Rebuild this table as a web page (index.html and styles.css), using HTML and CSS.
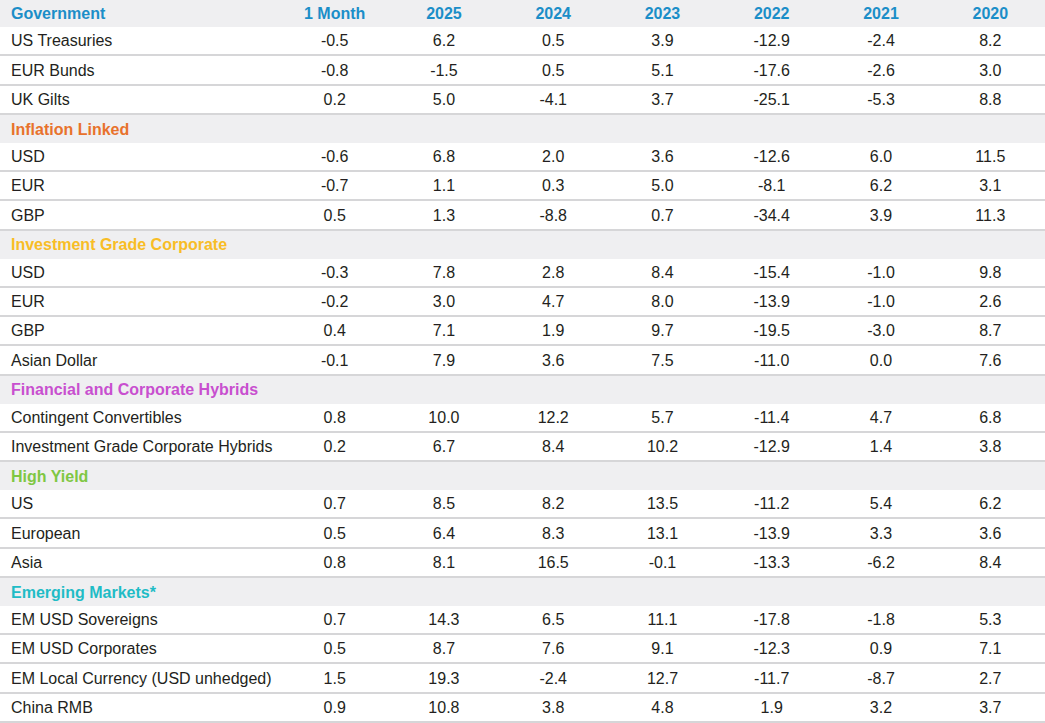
FILE: index.html
```html
<!DOCTYPE html>
<html lang="en">
<head>
<meta charset="utf-8">
<title>Fixed Income Returns</title>
<link rel="stylesheet" href="styles.css">
</head>
<body>
<table class="returns">
  <colgroup>
    <col class="col-label">
    <col span="7" class="col-num">
  </colgroup>
  <thead>
    <tr class="head">
      <th class="label c-gov">Government</th>
      <th>1 Month</th><th>2025</th><th>2024</th><th>2023</th><th>2022</th><th>2021</th><th>2020</th>
    </tr>
  </thead>
  <tbody>
    <tr class="row"><td class="label">US Treasuries</td><td>-0.5</td><td>6.2</td><td>0.5</td><td>3.9</td><td>-12.9</td><td>-2.4</td><td>8.2</td></tr>
    <tr class="row"><td class="label">EUR Bunds</td><td>-0.8</td><td>-1.5</td><td>0.5</td><td>5.1</td><td>-17.6</td><td>-2.6</td><td>3.0</td></tr>
    <tr class="row"><td class="label">UK Gilts</td><td>0.2</td><td>5.0</td><td>-4.1</td><td>3.7</td><td>-25.1</td><td>-5.3</td><td>8.8</td></tr>

    <tr class="cat"><td class="label c-infl" colspan="8">Inflation Linked</td></tr>
    <tr class="row"><td class="label">USD</td><td>-0.6</td><td>6.8</td><td>2.0</td><td>3.6</td><td>-12.6</td><td>6.0</td><td>11.5</td></tr>
    <tr class="row"><td class="label">EUR</td><td>-0.7</td><td>1.1</td><td>0.3</td><td>5.0</td><td>-8.1</td><td>6.2</td><td>3.1</td></tr>
    <tr class="row"><td class="label">GBP</td><td>0.5</td><td>1.3</td><td>-8.8</td><td>0.7</td><td>-34.4</td><td>3.9</td><td>11.3</td></tr>

    <tr class="cat"><td class="label c-ig" colspan="8">Investment Grade Corporate</td></tr>
    <tr class="row"><td class="label">USD</td><td>-0.3</td><td>7.8</td><td>2.8</td><td>8.4</td><td>-15.4</td><td>-1.0</td><td>9.8</td></tr>
    <tr class="row"><td class="label">EUR</td><td>-0.2</td><td>3.0</td><td>4.7</td><td>8.0</td><td>-13.9</td><td>-1.0</td><td>2.6</td></tr>
    <tr class="row"><td class="label">GBP</td><td>0.4</td><td>7.1</td><td>1.9</td><td>9.7</td><td>-19.5</td><td>-3.0</td><td>8.7</td></tr>
    <tr class="row"><td class="label">Asian Dollar</td><td>-0.1</td><td>7.9</td><td>3.6</td><td>7.5</td><td>-11.0</td><td>0.0</td><td>7.6</td></tr>

    <tr class="cat"><td class="label c-fin" colspan="8">Financial and Corporate Hybrids</td></tr>
    <tr class="row"><td class="label">Contingent Convertibles</td><td>0.8</td><td>10.0</td><td>12.2</td><td>5.7</td><td>-11.4</td><td>4.7</td><td>6.8</td></tr>
    <tr class="row"><td class="label">Investment Grade Corporate Hybrids</td><td>0.2</td><td>6.7</td><td>8.4</td><td>10.2</td><td>-12.9</td><td>1.4</td><td>3.8</td></tr>

    <tr class="cat"><td class="label c-hy" colspan="8">High Yield</td></tr>
    <tr class="row"><td class="label">US</td><td>0.7</td><td>8.5</td><td>8.2</td><td>13.5</td><td>-11.2</td><td>5.4</td><td>6.2</td></tr>
    <tr class="row"><td class="label">European</td><td>0.5</td><td>6.4</td><td>8.3</td><td>13.1</td><td>-13.9</td><td>3.3</td><td>3.6</td></tr>
    <tr class="row"><td class="label">Asia</td><td>0.8</td><td>8.1</td><td>16.5</td><td>-0.1</td><td>-13.3</td><td>-6.2</td><td>8.4</td></tr>

    <tr class="cat"><td class="label c-em" colspan="8">Emerging Markets*</td></tr>
    <tr class="row"><td class="label">EM USD Sovereigns</td><td>0.7</td><td>14.3</td><td>6.5</td><td>11.1</td><td>-17.8</td><td>-1.8</td><td>5.3</td></tr>
    <tr class="row"><td class="label">EM USD Corporates</td><td>0.5</td><td>8.7</td><td>7.6</td><td>9.1</td><td>-12.3</td><td>0.9</td><td>7.1</td></tr>
    <tr class="row"><td class="label">EM Local Currency (USD unhedged)</td><td>1.5</td><td>19.3</td><td>-2.4</td><td>12.7</td><td>-11.7</td><td>-8.7</td><td>2.7</td></tr>
    <tr class="row"><td class="label">China RMB</td><td>0.9</td><td>10.8</td><td>3.8</td><td>4.8</td><td>1.9</td><td>3.2</td><td>3.7</td></tr>
  </tbody>
</table>
</body>
</html>
```

FILE: styles.css
```css
html, body {
  margin: 0;
  padding: 0;
  background: #ffffff;
}

body {
  font-family: "Liberation Sans", Arial, sans-serif;
  font-size: 16px;
  color: #231f20;
}

.returns {
  width: 1045px;
  border-collapse: collapse;
  table-layout: fixed;
}

.col-label { width: 280px; }
.col-num { width: 109.28px; }

.returns th,
.returns td {
  padding: 1.5px 0 0 0;
  text-align: center;
  vertical-align: middle;
  white-space: nowrap;
  line-height: 18px;
}

.returns .label {
  text-align: left;
  padding-left: 11px;
}

.head th {
  height: 25.5px;
  background: #efeff1;
  color: #1b8ec8;
  font-weight: bold;
}

.cat td {
  height: 26.5px;
  background: #efeff1;
  font-weight: bold;
}

.row td {
  height: 25.75px;
  border-bottom: 2px solid #d6d6d8;
  background: #ffffff;
}

.c-gov  { color: #1b8ec8; }
.c-infl { color: #e8722c; }
.c-ig   { color: #f8bd26; }
.c-fin  { color: #c84fcf; }
.c-hy   { color: #7fc743; }
.c-em   { color: #1fbcc6; }
```
